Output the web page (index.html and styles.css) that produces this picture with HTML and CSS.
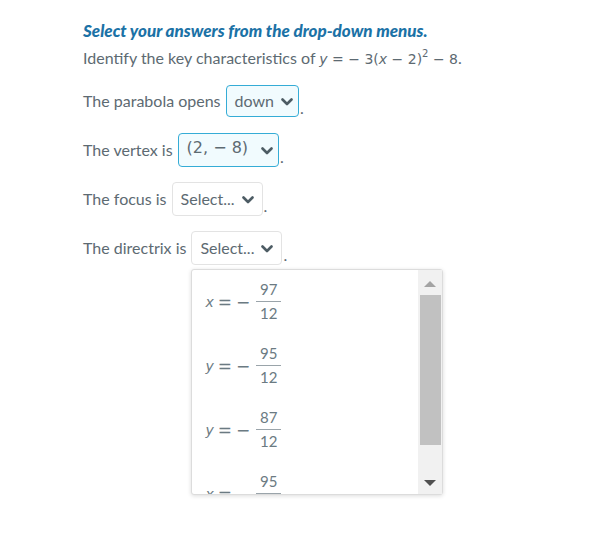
FILE: index.html
```html
<!DOCTYPE html>
<html>
<head>
<meta charset="utf-8">
<link rel="stylesheet" href="styles.css">
</head>
<body>
<div class="page">
  <p class="title">Select your answers from the drop-down menus.</p>
  <p class="intro">Identify the key characteristics of <span class="math"><i>y</i> = − 3(<i>x</i> − 2)<sup>2</sup> − 8</span>.</p>

  <div class="row">
    <span>The parabola opens</span>
    <span class="sel sel-done sel-open"><span class="val">down</span><span class="chev"><svg width="12" height="8" viewBox="0 0 12 8"><path d="M1.5 1.5 L6 6 L10.5 1.5" fill="none" stroke="#4d5c64" stroke-width="2.6" stroke-linecap="round" stroke-linejoin="round"/></svg></span></span><span class="dot">.</span>
  </div>

  <div class="row">
    <span>The vertex is</span>
    <span class="sel sel-done sel-vertex"><span class="val math">(2, − 8)</span><span class="chev"><svg width="12" height="8" viewBox="0 0 12 8"><path d="M1.5 1.5 L6 6 L10.5 1.5" fill="none" stroke="#4d5c64" stroke-width="2.6" stroke-linecap="round" stroke-linejoin="round"/></svg></span></span><span class="dot">.</span>
  </div>

  <div class="row">
    <span>The focus is</span>
    <span class="sel sel-empty"><span class="val">Select...</span><span class="chev"><svg width="12" height="8" viewBox="0 0 12 8"><path d="M1.5 1.5 L6 6 L10.5 1.5" fill="none" stroke="#4d5c64" stroke-width="2.6" stroke-linecap="round" stroke-linejoin="round"/></svg></span></span><span class="dot">.</span>
  </div>

  <div class="row">
    <span>The directrix is</span>
    <span class="sel-wrap">
      <span class="sel sel-empty"><span class="val">Select...</span><span class="chev"><svg width="12" height="8" viewBox="0 0 12 8"><path d="M1.5 1.5 L6 6 L10.5 1.5" fill="none" stroke="#4d5c64" stroke-width="2.6" stroke-linecap="round" stroke-linejoin="round"/></svg></span></span>
      <div class="menu">
        <div class="options">
          <div class="opt"><i>x</i><span class="op">=</span><span class="op">−</span><span class="frac"><span>97</span><span class="bar"></span><span>12</span></span></div>
          <div class="opt"><i>y</i><span class="op">=</span><span class="op">−</span><span class="frac"><span>95</span><span class="bar"></span><span>12</span></span></div>
          <div class="opt"><i>y</i><span class="op">=</span><span class="op">−</span><span class="frac"><span>87</span><span class="bar"></span><span>12</span></span></div>
          <div class="opt"><i>x</i><span class="op">=</span><span class="op">−</span><span class="frac"><span>95</span><span class="bar"></span><span>12</span></span></div>
        </div>
        <div class="scrollbar">
          <div class="arrow up"></div>
          <div class="thumb"></div>
          <div class="arrow down"></div>
        </div>
      </div>
    </span><span class="dot">.</span>
  </div>
</div>
</body>
</html>
```
FILE: styles.css
```css
html, body {
  margin: 0;
  padding: 0;
  background: #ffffff;
}
body {
  font-family: Lato, "Open Sans", sans-serif;
  color: #5d6a72;
  font-size: 16px;
  min-height: 538px;
}
.page {
  padding: 20px 0 0 83px;
  min-height: 538px;
  box-sizing: border-box;
}
.title {
  margin: 0;
  font-weight: 900;
  font-style: italic;
  color: #1b72a6;
  font-size: 17px;
  line-height: 22px;
}
.intro {
  margin: 4px 0 0;
  line-height: 24px;
}
.math {
  font-family: "DejaVu Sans", sans-serif;
  font-size: 14px;
}
.math i {
  font-family: "DejaVu Sans", sans-serif;
}
.math sup {
  font-size: 10px;
  vertical-align: 7px;
  line-height: 0;
}
.row {
  display: flex;
  align-items: center;
  height: 49px;
  gap: 5px;
}
.intro + .row {
  margin-top: 5px;
}
.sel-wrap {
  position: relative;
  display: inline-flex;
}
.sel {
  display: inline-flex;
  align-items: center;
  box-sizing: border-box;
  height: 34px;
  padding: 0 5px 0 8px;
  border: 1px solid #e3e3e3;
  border-radius: 4px;
  background: #fff;
}
.sel .val {
  margin-right: 7px;
}
.sel-empty {
  padding: 0 8px 0 8px;
}
.sel-empty .val {
  margin-right: 7px;
}
.sel-done {
  border-color: #35acd6;
  background: #f1fbfe;
}
.sel-open {
  height: 32px;
}
.sel-vertex .val {
  font-size: 16px;
  margin-right: 13px;
  margin-top: -4px;
}
.chev {
  display: inline-flex;
  width: 12px;
  margin-top: 2px;
}
.dot {
  margin-left: -4px;
  align-self: flex-end;
  margin-bottom: 9px;
  line-height: 16px;
}
.menu {
  position: absolute;
  left: 0;
  top: 38px;
  width: 252px;
  height: 226px;
  box-sizing: border-box;
  border: 1px solid #dcdcdc;
  border-radius: 3px;
  background: #fff;
  box-shadow: 0 1px 4px rgba(0,0,0,0.14);
  display: flex;
  z-index: 5;
}
.options {
  flex: 1;
  padding: 0 0 0 13px;
  overflow: hidden;
}
.opt {
  display: flex;
  align-items: center;
  height: 64px;
  font-family: "DejaVu Sans", sans-serif;
  font-size: 14px;
  color: #6b7a82;
  gap: 4px;
}
.opt i {
  font-family: "DejaVu Sans", sans-serif;
}
.op {
  font-size: 17px;
}
.frac {
  display: inline-flex;
  flex-direction: column;
  align-items: center;
  width: 25px;
  margin-left: 2px;
  font-family: Lato, sans-serif;
  font-size: 15px;
  line-height: 19px;
}
.frac .bar {
  width: 25px;
  height: 1px;
  background: #9aa4aa;
  margin: 2px 0;
}
.scrollbar {
  width: 24px;
  background: #f1f1f1;
  display: flex;
  flex-direction: column;
  align-items: center;
}
.arrow {
  width: 0;
  height: 0;
  border-left: 6px solid transparent;
  border-right: 6px solid transparent;
}
.arrow.up {
  border-bottom: 6px solid #a3a3a3;
  margin: 11px 0 8px;
}
.arrow.down {
  border-top: 6px solid #505050;
  margin-top: auto;
  margin-bottom: 8px;
}
.thumb {
  width: 21px;
  height: 150px;
  background: #c1c1c1;
}
```
